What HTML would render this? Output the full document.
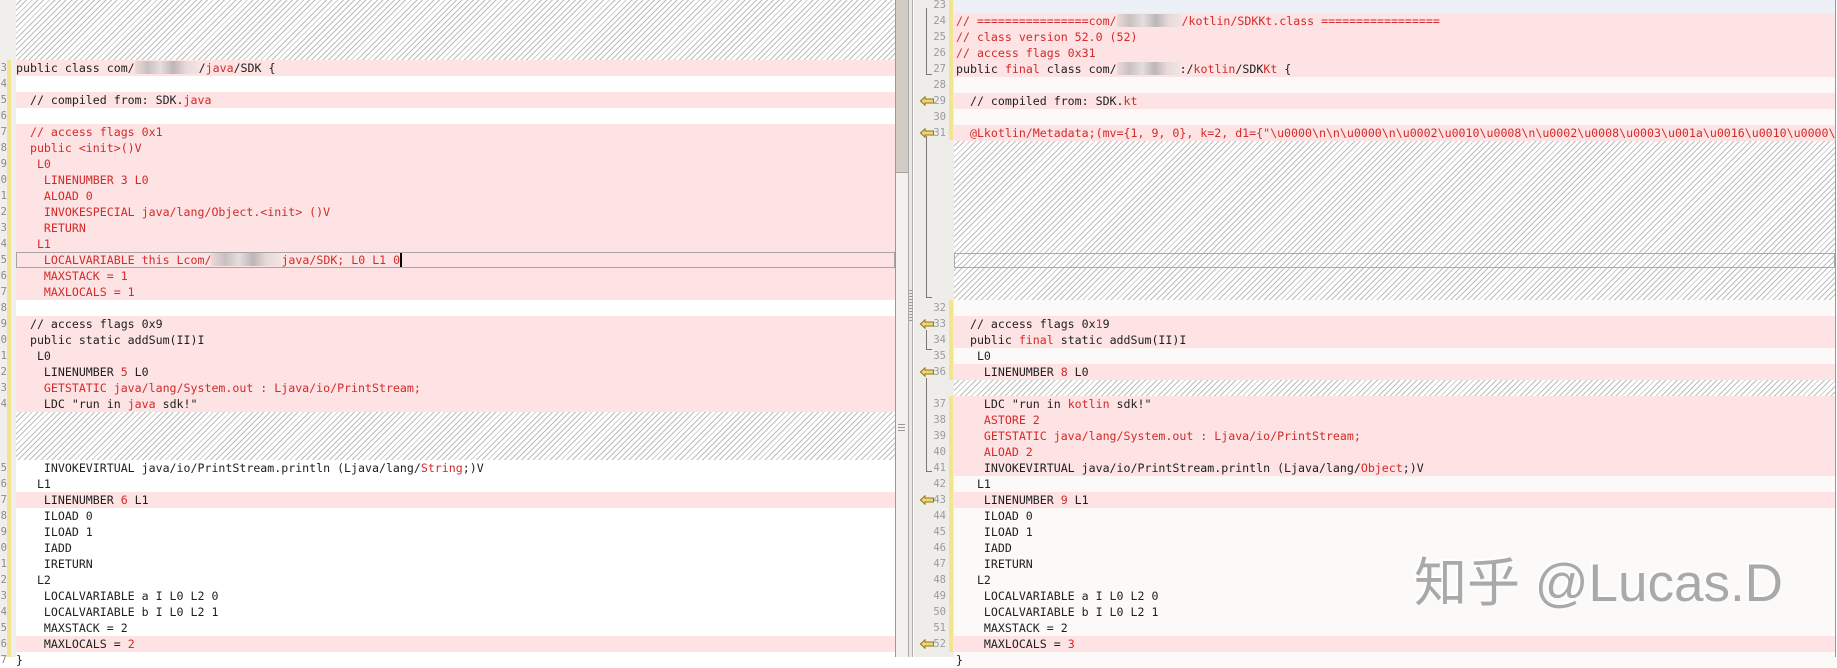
<!DOCTYPE html>
<html><head><meta charset="utf-8"><style>
*{margin:0;padding:0;box-sizing:border-box}
body{width:1837px;height:657px;overflow:hidden;background:#fff;position:relative;font-family:"DejaVu Sans Mono",monospace}
.a{position:absolute}
.r{position:absolute;height:16px;line-height:16px;white-space:pre;font-size:11.6px;color:#1e1e1e}
.L{left:16px;width:879px}
.R{left:954px;width:881px;padding-left:2px}
.p{background:#fde3e3}
.wl{background:#fff}
.wr{background:#fbfaf8}
.e{color:#d42a2a}
.h{position:absolute;background:repeating-linear-gradient(135deg,#fff 0 3px,#bdbdbd 3px 4px)}
.n{position:absolute;left:0;width:7px;height:16px;line-height:16px;font-size:10.5px;color:#8a8a8a;overflow:hidden;text-align:right;direction:rtl}
.m{position:absolute;left:918px;width:28px;height:16px;line-height:16px;font-size:10.5px;color:#9a9a9a;text-align:right}
.b{display:inline-block;height:13px;vertical-align:-2px;background:linear-gradient(90deg,#eadada,#c9c0c0 20%,#e6dede 40%,#bdb6b6 60%,#e9dada 80%,#f0e4e4)}
.ar{position:absolute;left:920px;width:14px;height:10px}
.br{position:absolute;left:926px;border-left:1px solid #777;border-bottom:1px solid #777;width:6px}
</style></head><body>

<!-- left pane -->
<div class="a" style="left:0;top:0;width:16px;height:657px;background:#f0efed"></div>
<div class="a" style="left:7px;top:60px;width:4px;height:597px;background:#f3e48e"></div>
<div class="h" style="left:16px;top:0;width:879px;height:60px"></div>

<div class="n" style="top:60px">3</div><div class="r L p" style="top:60px">public class com/<span class="b" style="width:64px"></span>/<span class="e">java</span>/SDK {</div>
<div class="n" style="top:76px">4</div><div class="r L wl" style="top:76px"></div>
<div class="n" style="top:92px">5</div><div class="r L p" style="top:92px">  // compiled from: SDK.<span class="e">java</span></div>
<div class="n" style="top:108px">6</div><div class="r L wl" style="top:108px"></div>
<div class="n" style="top:124px">7</div><div class="r L p e" style="top:124px">  // access flags 0x1</div>
<div class="n" style="top:140px">8</div><div class="r L p e" style="top:140px">  public &lt;init&gt;()V</div>
<div class="n" style="top:156px">9</div><div class="r L p e" style="top:156px">   L0</div>
<div class="n" style="top:172px">0</div><div class="r L p e" style="top:172px">    LINENUMBER 3 L0</div>
<div class="n" style="top:188px">1</div><div class="r L p e" style="top:188px">    ALOAD 0</div>
<div class="n" style="top:204px">2</div><div class="r L p e" style="top:204px">    INVOKESPECIAL java/lang/Object.&lt;init&gt; ()V</div>
<div class="n" style="top:220px">3</div><div class="r L p e" style="top:220px">    RETURN</div>
<div class="n" style="top:236px">4</div><div class="r L p e" style="top:236px">   L1</div>
<div class="n" style="top:252px">5</div><div class="r L p e" style="top:252px;outline:1px solid #a9a3a3;outline-offset:-1px">    LOCALVARIABLE this Lcom/<span class="b" style="width:70px"></span>java/SDK; L0 L1 0<span style="display:inline-block;width:2px;height:14px;background:#000;vertical-align:-3px"></span></div>
<div class="n" style="top:268px">6</div><div class="r L p e" style="top:268px">    MAXSTACK = 1</div>
<div class="n" style="top:284px">7</div><div class="r L p e" style="top:284px">    MAXLOCALS = 1</div>
<div class="n" style="top:300px">8</div><div class="r L wl" style="top:300px"></div>
<div class="n" style="top:316px">9</div><div class="r L p" style="top:316px">  // access flags 0x9</div>
<div class="n" style="top:332px">0</div><div class="r L p" style="top:332px">  public static addSum(II)I</div>
<div class="n" style="top:348px">1</div><div class="r L p" style="top:348px">   L0</div>
<div class="n" style="top:364px">2</div><div class="r L p" style="top:364px">    LINENUMBER <span class="e">5</span> L0</div>
<div class="n" style="top:380px">3</div><div class="r L p e" style="top:380px">    GETSTATIC java/lang/System.out : Ljava/io/PrintStream;</div>
<div class="n" style="top:396px">4</div><div class="r L p" style="top:396px">    LDC "run in <span class="e">java</span> sdk!"</div>
<div class="h" style="left:16px;top:412px;width:879px;height:48px"></div>
<div class="n" style="top:460px">5</div><div class="r L wl" style="top:460px">    INVOKEVIRTUAL java/io/PrintStream.println (Ljava/lang/<span class="e">String</span>;)V</div>
<div class="n" style="top:476px">6</div><div class="r L wl" style="top:476px">   L1</div>
<div class="n" style="top:492px">7</div><div class="r L p" style="top:492px">    LINENUMBER <span class="e">6</span> L1</div>
<div class="n" style="top:508px">8</div><div class="r L wl" style="top:508px">    ILOAD 0</div>
<div class="n" style="top:524px">9</div><div class="r L wl" style="top:524px">    ILOAD 1</div>
<div class="n" style="top:540px">0</div><div class="r L wl" style="top:540px">    IADD</div>
<div class="n" style="top:556px">1</div><div class="r L wl" style="top:556px">    IRETURN</div>
<div class="n" style="top:572px">2</div><div class="r L wl" style="top:572px">   L2</div>
<div class="n" style="top:588px">3</div><div class="r L wl" style="top:588px">    LOCALVARIABLE a I L0 L2 0</div>
<div class="n" style="top:604px">4</div><div class="r L wl" style="top:604px">    LOCALVARIABLE b I L0 L2 1</div>
<div class="n" style="top:620px">5</div><div class="r L wl" style="top:620px">    MAXSTACK = 2</div>
<div class="n" style="top:636px">6</div><div class="r L p" style="top:636px">    MAXLOCALS = <span class="e">2</span></div>
<div class="n" style="top:652px">7</div><div class="r L wl" style="top:652px">}</div>

<!-- scrollbar / divider -->
<div class="a" style="left:895px;top:0;width:14px;height:657px;background:#f3f1ee;border-left:1px solid #9a9a9a;border-right:1px solid #aaa"></div>
<div class="a" style="left:896px;top:0;width:12px;height:173px;background:#d3ccc4;border-bottom:1px solid #a8a29b"></div>
<div class="a" style="left:898px;top:424px;width:7px;height:7px;border-top:1px solid #999;border-bottom:1px solid #999"></div>
<div class="a" style="left:898px;top:427px;width:7px;height:1px;background:#999"></div>
<div class="a" style="left:909px;top:0;width:4px;height:657px;background:#ebe9e6;border-right:1px solid #b0aeab"></div>
<div class="a" style="left:909px;top:290px;width:4px;height:32px;background:repeating-linear-gradient(#999 0 1px,transparent 1px 3px)"></div>

<!-- right gutter -->
<div class="a" style="left:914px;top:0;width:40px;height:657px;background:#efedea"></div>
<div class="a" style="left:949px;top:0;width:4px;height:140px;background:#f3e48e"></div>
<div class="a" style="left:949px;top:300px;width:4px;height:80px;background:#f3e48e"></div>
<div class="a" style="left:949px;top:396px;width:4px;height:256px;background:#f3e48e"></div>
<div class="br" style="top:8px;height:67px"></div>
<div class="br" style="top:136px;height:162px"></div>
<div class="br" style="top:330px;height:20px"></div>
<div class="br" style="top:378px;height:94px"></div>

<div class="a" style="left:954px;top:0;width:881px;height:13px;background:#eef0f7"></div>
<div class="m" style="top:-3px">23</div>
<div class="m" style="top:13px">24</div><div class="r R p e" style="top:13px">// ================com/<span class="b" style="width:65px"></span>/kotlin/SDKKt.class =================</div>
<div class="m" style="top:29px">25</div><div class="r R p e" style="top:29px">// class version 52.0 (52)</div>
<div class="m" style="top:45px">26</div><div class="r R p e" style="top:45px">// access flags 0x31</div>
<div class="m" style="top:61px">27</div><div class="r R p" style="top:61px">public <span class="e">final</span> class com/<span class="b" style="width:63px"></span>:/<span class="e">kotlin</span>/SDK<span class="e">Kt</span> {</div>
<div class="m" style="top:77px">28</div><div class="r R wr" style="top:77px"></div>
<div class="m" style="top:93px">29</div><div class="r R p" style="top:93px">  // compiled from: SDK.<span class="e">kt</span></div>
<div class="m" style="top:109px">30</div><div class="r R wr" style="top:109px"></div>
<div class="m" style="top:125px">31</div><div class="r R p e" style="top:125px;overflow:hidden">  @Lkotlin/Metadata;(mv={1, 9, 0}, k=2, d1={"\u0000\n\n\u0000\n\u0002\u0010\u0008\n\u0002\u0008\u0003\u001a\u0016\u0010\u0000\u0000"</div>
<div class="h" style="left:954px;top:141px;width:881px;height:159px"></div>
<div class="a" style="left:954px;top:253px;width:881px;height:15px;border:1px solid #aaa"></div>
<div class="m" style="top:300px">32</div><div class="r R wr" style="top:300px"></div>
<div class="m" style="top:316px">33</div><div class="r R p" style="top:316px">  // access flags 0x<span class="e">1</span>9</div>
<div class="m" style="top:332px">34</div><div class="r R p" style="top:332px">  public <span class="e">final</span> static addSum(II)I</div>
<div class="m" style="top:348px">35</div><div class="r R wr" style="top:348px">   L0</div>
<div class="m" style="top:364px">36</div><div class="r R p" style="top:364px">    LINENUMBER <span class="e">8</span> L0</div>
<div class="h" style="left:954px;top:380px;width:881px;height:16px"></div>
<div class="m" style="top:396px">37</div><div class="r R p" style="top:396px">    LDC "run in <span class="e">kotlin</span> sdk!"</div>
<div class="m" style="top:412px">38</div><div class="r R p e" style="top:412px">    ASTORE 2</div>
<div class="m" style="top:428px">39</div><div class="r R p e" style="top:428px">    GETSTATIC java/lang/System.out : Ljava/io/PrintStream;</div>
<div class="m" style="top:444px">40</div><div class="r R p e" style="top:444px">    ALOAD 2</div>
<div class="m" style="top:460px">41</div><div class="r R p" style="top:460px">    INVOKEVIRTUAL java/io/PrintStream.println (Ljava/lang/<span class="e">Object</span>;)V</div>
<div class="m" style="top:476px">42</div><div class="r R wr" style="top:476px">   L1</div>
<div class="m" style="top:492px">43</div><div class="r R p" style="top:492px">    LINENUMBER <span class="e">9</span> L1</div>
<div class="m" style="top:508px">44</div><div class="r R wr" style="top:508px">    ILOAD 0</div>
<div class="m" style="top:524px">45</div><div class="r R wr" style="top:524px">    ILOAD 1</div>
<div class="m" style="top:540px">46</div><div class="r R wr" style="top:540px">    IADD</div>
<div class="m" style="top:556px">47</div><div class="r R wr" style="top:556px">    IRETURN</div>
<div class="m" style="top:572px">48</div><div class="r R wr" style="top:572px">   L2</div>
<div class="m" style="top:588px">49</div><div class="r R wr" style="top:588px">    LOCALVARIABLE a I L0 L2 0</div>
<div class="m" style="top:604px">50</div><div class="r R wr" style="top:604px">    LOCALVARIABLE b I L0 L2 1</div>
<div class="m" style="top:620px">51</div><div class="r R wr" style="top:620px">    MAXSTACK = 2</div>
<div class="m" style="top:636px">52</div><div class="r R p" style="top:636px">    MAXLOCALS = <span class="e">3</span></div>
<div class="r R wr" style="top:652px">}</div>

<!-- arrows -->
<svg class="ar" style="top:96px" viewBox="0 0 14 10"><path d="M0.5 5 L5 0.8 L5 3 L13.5 3 L13.5 7 L5 7 L5 9.2 Z" fill="#f2d66a" stroke="#8d7324" stroke-width="1"/></svg>
<svg class="ar" style="top:128px" viewBox="0 0 14 10"><path d="M0.5 5 L5 0.8 L5 3 L13.5 3 L13.5 7 L5 7 L5 9.2 Z" fill="#f2d66a" stroke="#8d7324" stroke-width="1"/></svg>
<svg class="ar" style="top:319px" viewBox="0 0 14 10"><path d="M0.5 5 L5 0.8 L5 3 L13.5 3 L13.5 7 L5 7 L5 9.2 Z" fill="#f2d66a" stroke="#8d7324" stroke-width="1"/></svg>
<svg class="ar" style="top:367px" viewBox="0 0 14 10"><path d="M0.5 5 L5 0.8 L5 3 L13.5 3 L13.5 7 L5 7 L5 9.2 Z" fill="#f2d66a" stroke="#8d7324" stroke-width="1"/></svg>
<svg class="ar" style="top:495px" viewBox="0 0 14 10"><path d="M0.5 5 L5 0.8 L5 3 L13.5 3 L13.5 7 L5 7 L5 9.2 Z" fill="#f2d66a" stroke="#8d7324" stroke-width="1"/></svg>
<svg class="ar" style="top:639px" viewBox="0 0 14 10"><path d="M0.5 5 L5 0.8 L5 3 L13.5 3 L13.5 7 L5 7 L5 9.2 Z" fill="#f2d66a" stroke="#8d7324" stroke-width="1"/></svg>

<div class="a" style="left:1835px;top:0;width:1px;height:657px;background:#999"></div>

<!-- watermark -->
<div class="a" style="left:1414px;top:548px;font:53px 'Liberation Sans','Noto Sans CJK SC',sans-serif;color:#a9a9a9;white-space:nowrap;line-height:72px;text-shadow:-2px -2px 0 #fff">知乎 @Lucas.D</div>
</body></html>
